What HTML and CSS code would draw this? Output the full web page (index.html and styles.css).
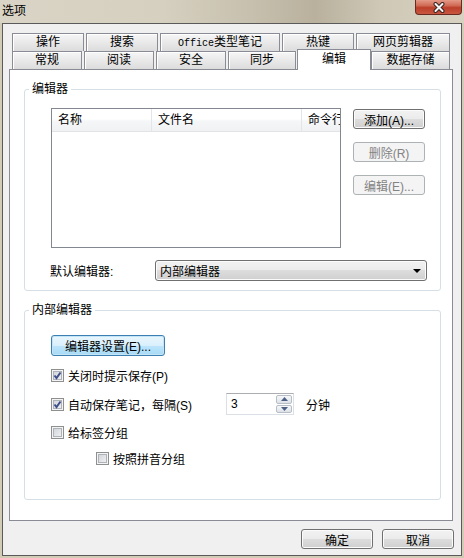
FILE: index.html
```html
<!DOCTYPE html>
<html lang="zh-CN">
<head>
    <meta charset="UTF-8">
    <title>选项</title>
    <link rel="stylesheet" href="styles.css">
</head>
<body>
    <div class="titlebar">
        <span class="title">选项</span>
        <span class="close">
            <svg width="14" height="11" viewBox="0 0 14 11">
                <path d="M3.5 2 L10.5 9 M10.5 2 L3.5 9" stroke="#3b2622" stroke-width="4" stroke-linecap="round"/>
                <path d="M3.5 2 L10.5 9 M10.5 2 L3.5 9" stroke="#f4f4f4" stroke-width="2" stroke-linecap="round"/>
            </svg>
        </span>
    </div>

    <div class="window">
        <div class="tabs">
            <div class="tab-row">
                <div class="tab w72">操作</div>
                <div class="tab w72">搜索</div>
                <div class="tab w120"><span class="mono">Office</span>类型笔记</div>
                <div class="tab w72">热键</div>
                <div class="tab w94">网页剪辑器</div>
            </div>
            <div class="tab-row">
                <div class="tab w70">常规</div>
                <div class="tab w70">阅读</div>
                <div class="tab w70">安全</div>
                <div class="tab w68">同步</div>
                <div class="tab tab-active">编辑</div>
                <div class="tab w79">数据存储</div>
            </div>
        </div>

        <div class="panel">
            <fieldset class="group">
                <legend>编辑器</legend>
                <div class="group-body editors">
                    <div class="editors-row">
                        <div class="listview">
                            <div class="list-header">
                                <span class="col col-name">名称</span>
                                <span class="col col-file">文件名</span>
                                <span class="col col-cmd">命令行</span>
                            </div>
                        </div>
                        <div class="side-buttons">
                            <button class="btn">添加(A)...</button>
                            <button class="btn disabled">删除(R)</button>
                            <button class="btn disabled">编辑(E)...</button>
                        </div>
                    </div>
                    <div class="default-row">
                        <span class="default-label">默认编辑器:</span>
                        <div class="combo">
                            <span>内部编辑器</span>
                            <span class="combo-arrow"></span>
                        </div>
                    </div>
                </div>
            </fieldset>

            <fieldset class="group group-inner">
                <legend>内部编辑器</legend>
                <div class="group-body internal">
                    <button class="btn btn-default">编辑器设置(E)...</button>

                    <div class="check-row row-1">
                        <span class="check">
                            <svg width="11" height="11" viewBox="0 0 11 11"><path d="M2.5 5.5 L4.5 8 L8.5 2.5" fill="none" stroke="#3f4f8c" stroke-width="2"/></svg>
                        </span>
                        <span>关闭时提示保存(P)</span>
                    </div>

                    <div class="check-row row-2">
                        <div class="check-label">
                            <span class="check">
                                <svg width="11" height="11" viewBox="0 0 11 11"><path d="M2.5 5.5 L4.5 8 L8.5 2.5" fill="none" stroke="#3f4f8c" stroke-width="2"/></svg>
                            </span>
                            <span>自动保存笔记，每隔(S)</span>
                        </div>
                        <div class="spin">
                            <span class="spin-value">3</span>
                            <div class="spin-buttons">
                                <span class="spin-btn"><svg width="7" height="4" viewBox="0 0 7 4"><path d="M0 4 L3.5 0 L7 4 Z" fill="#4d6185"/></svg></span>
                                <span class="spin-btn"><svg width="7" height="4" viewBox="0 0 7 4"><path d="M0 0 L7 0 L3.5 4 Z" fill="#4d6185"/></svg></span>
                            </div>
                        </div>
                        <span class="minutes">分钟</span>
                    </div>

                    <div class="check-row row-3">
                        <span class="check"></span>
                        <span>给标签分组</span>
                    </div>

                    <div class="check-row row-4">
                        <span class="check"></span>
                        <span>按照拼音分组</span>
                    </div>
                </div>
            </fieldset>
        </div>

        <div class="footer">
            <button class="btn">确定</button>
            <button class="btn">取消</button>
        </div>
    </div>
</body>
</html>
```

FILE: styles.css
```css
body {
    margin: 0;
    width: 464px;
    height: 558px;
    overflow: hidden;
    background: #d2cbb5;
    font-family: "Liberation Sans", "Noto Sans CJK SC", sans-serif;
    font-size: 12px;
    color: #000;
}
.titlebar {
    height: 23px;
    display: flex;
    justify-content: space-between;
    align-items: flex-start;
    padding: 0 2px;
    background: linear-gradient(90deg, #d9d4c5 0%, #d6d0c0 35%, #c6bfad 55%, #b9b19e 68%, #cfc8b6 82%, #d8d2c2 100%);
}
.title {
    margin-top: 4px;
    line-height: 14px;
}
.close {
    width: 47px;
    height: 15px;
    box-sizing: border-box;
    border: 1px solid #6a2a20;
    border-top: none;
    border-radius: 0 0 4px 4px;
    background: linear-gradient(#e49a88 0%, #d06a55 40%, #bb3f2a 55%, #c9573f 100%);
    display: flex;
    align-items: center;
    justify-content: center;
}
.window {
    margin: 0 2px;
    height: 533px;
    box-sizing: border-box;
    border: 1px solid #5a5a5a;
    background: #f0f0f0;
    padding: 9px 6px 0 6px;
}
.tabs {
    margin-left: 3px;
}
.tab-row {
    display: flex;
    align-items: flex-start;
    gap: 2px;
    height: 18px;
}
.tab {
    box-sizing: border-box;
    height: 18px;
    border: 1px solid #898c95;
    border-bottom: none;
    background: linear-gradient(#f6f6f6, #dcdcdc);
    box-shadow: inset 1px 1px 0 #ffffff;
    text-align: center;
    line-height: 17px;
    white-space: nowrap;
}
.mono {
    font-family: "Liberation Mono", monospace;
    font-size: 10px;
}
.w68 { width: 68px; }
.w70 { width: 70px; }
.w72 { width: 72px; }
.w79 { width: 79px; }
.w94 { width: 94px; }
.w120 { width: 120px; }
.tab-active {
    position: relative;
    z-index: 1;
    width: 74px;
    height: 21px;
    margin: -2px -2px 0 -1px;
    background: #ffffff;
    box-shadow: none;
    line-height: 18px;
}
.panel {
    width: 444px;
    height: 452px;
    box-sizing: border-box;
    border: 1px solid #898c95;
    background: #ffffff;
    padding: 12px 11px 0 14px;
}
.group {
    margin: 0;
    width: 417px;
    box-sizing: border-box;
    border: 1px solid #d5dfe5;
    border-radius: 3px;
    padding: 0 0 9px 4px;
}
.group legend {
    padding: 0 3px;
    line-height: 14px;
}
.group-inner {
    margin-top: 12px;
    padding-bottom: 34px;
}
.group-body {
    padding-left: 22px;
}
.editors {
    padding-top: 12px;
}
.editors-row {
    display: flex;
    gap: 12px;
}
.listview {
    width: 290px;
    height: 140px;
    box-sizing: border-box;
    border: 1px solid #828790;
    background: #ffffff;
}
.list-header {
    display: flex;
    height: 23px;
    box-sizing: border-box;
    border-bottom: 1px solid #e2e3e5;
    background: linear-gradient(#ffffff 0%, #ffffff 45%, #f5f6f7 55%, #f0f1f2 100%);
}
.col {
    box-sizing: border-box;
    padding-left: 6px;
    line-height: 22px;
    white-space: nowrap;
    overflow: hidden;
}
.col-name {
    width: 100px;
    border-right: 1px solid #e3e5e8;
}
.col-file {
    width: 150px;
    border-right: 1px solid #e3e5e8;
}
.col-cmd {
    flex: 1;
}
.side-buttons {
    display: flex;
    flex-direction: column;
    gap: 13px;
    padding-top: 1px;
}
.btn {
    box-sizing: border-box;
    width: 72px;
    height: 20px;
    padding: 0;
    border: 1px solid #707070;
    border-radius: 3px;
    background: linear-gradient(#f2f2f2 0%, #ebebeb 50%, #dddddd 50%, #cfcfcf 100%);
    box-shadow: inset 0 0 0 1px #fbfbfb;
    font-family: "Liberation Sans", "Noto Sans CJK SC", sans-serif;
    font-size: 12px;
    color: #000;
}
.btn.disabled {
    border-color: #adb2b5;
    background: #f4f4f4;
    box-shadow: none;
    color: #838383;
}
.btn-default {
    width: 114px;
    height: 21px;
    margin-top: 18px;
    border-color: #3c7fb1;
    background: linear-gradient(#eaf6fd 0%, #d9f0fc 50%, #bee6fd 50%, #a7d9f5 100%);
    box-shadow: inset 0 0 0 1px #c4e5f6;
}
.default-row {
    display: flex;
    align-items: center;
    margin-top: 12px;
}
.default-label {
    width: 105px;
    margin-left: -1px;
}
.combo {
    width: 272px;
    height: 21px;
    box-sizing: border-box;
    border: 1px solid #707070;
    border-radius: 3px;
    background: linear-gradient(#f2f2f2 0%, #ebebeb 50%, #dddddd 50%, #cfcfcf 100%);
    box-shadow: inset 0 0 0 1px #fbfbfb;
    display: flex;
    align-items: center;
    justify-content: space-between;
    padding: 0 5px 0 4px;
}
.combo-arrow {
    width: 0;
    height: 0;
    border-left: 4px solid transparent;
    border-right: 4px solid transparent;
    border-top: 4px solid #000;
}
.check-row {
    display: flex;
    align-items: center;
    gap: 4px;
    height: 14px;
}
.row-1 { margin-top: 12px; }
.row-2 { margin-top: 11px; height: 22px; gap: 0; }
.row-3 { margin-top: 10px; }
.row-4 { margin-top: 12px; margin-left: 45px; }
.check-label {
    width: 175px;
    display: flex;
    align-items: center;
    gap: 4px;
}
.check {
    width: 13px;
    height: 13px;
    box-sizing: border-box;
    border: 1px solid #8e8f8f;
    background: linear-gradient(135deg, #cbcfd5, #f6f6f6);
    box-shadow: inset 0 0 0 1px #f4f4f4, inset 0 0 0 2px #aeb3b9;
    display: flex;
    align-items: center;
    justify-content: center;
}
.spin {
    width: 68px;
    height: 22px;
    box-sizing: border-box;
    border: 1px solid #dbdfe6;
    border-top-color: #abadb3;
    background: #ffffff;
    display: flex;
    justify-content: space-between;
}
.spin-value {
    padding-left: 4px;
    line-height: 20px;
}
.spin-buttons {
    width: 16px;
    display: flex;
    flex-direction: column;
    gap: 1px;
    padding: 1px 1px 1px 0;
}
.spin-btn {
    flex: 1;
    box-sizing: border-box;
    border: 1px solid #b8bec6;
    border-radius: 2px;
    background: linear-gradient(#f7f8f9, #dde2e8);
    display: flex;
    align-items: center;
    justify-content: center;
}
.minutes {
    margin-left: 12px;
}
.footer {
    display: flex;
    justify-content: flex-end;
    gap: 9px;
    margin-top: 8px;
    margin-right: 1px;
}
```
